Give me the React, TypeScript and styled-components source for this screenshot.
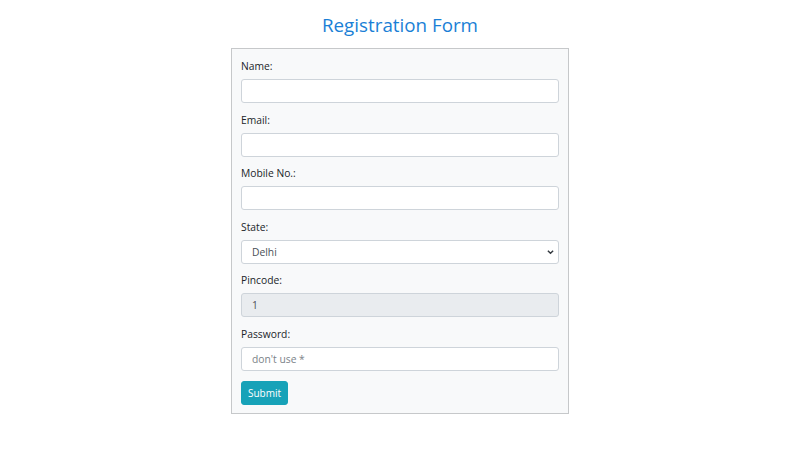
import React from "react";
import styled, { createGlobalStyle } from "styled-components";

const Global = createGlobalStyle`
  html, body { margin: 0; padding: 0; background: #fff; }
  body { font-family: "Open Sans", "Noto Sans", sans-serif; color: #212529; }
  * { box-sizing: border-box; }
`;

const Page = styled.div`
  display: flex;
  flex-direction: column;
  align-items: center;
  padding-top: 12px;
`;

const Title = styled.h2`
  margin: 0 0 10px;
  font-size: 18.8px;
  font-weight: 400;
  line-height: 26px;
  color: #1a7fd6;
`;

const Card = styled.form`
  width: 338px;
  border: 1px solid #c6c8ca;
  background: #f8f9fa;
  padding: 9px 9px 8px 9px;
  display: flex;
  flex-direction: column;
`;

const Group = styled.div`
  display: flex;
  flex-direction: column;
  margin-bottom: 8.6px;
`;

const Label = styled.label`
  font-size: 10.3px;
  line-height: 16px;
  margin-bottom: 5px;
  color: #212529;
`;

const fieldCss = `
  display: block;
  height: 24px;
  width: 100%;
  margin: 0;
  border: 1px solid #ced4da;
  border-radius: 3px;
  font-family: "Open Sans", "Noto Sans", sans-serif;
  font-size: 10.3px;
  padding: 0 10px;
  color: #495057;
  outline: none;
`;

const Input = styled.input<{ $disabled?: boolean }>`
  ${fieldCss}
  background: ${(p) => (p.$disabled ? "#e9ecef" : "#fff")};
  &::placeholder { color: #7b8288; }
`;

const SelectWrap = styled.div`
  position: relative;
  height: 24px;
`;

const Select = styled.select`
  ${fieldCss}
  appearance: none;
  background: #fff;
  padding-left: 10px;
`;

const Chevron = styled.svg`
  position: absolute;
  right: 5px;
  top: 9px;
  width: 7px;
  height: 6px;
  pointer-events: none;
`;

const Submit = styled.button`
  align-self: flex-start;
  margin: 1.5px 0 0;
  height: 24px;
  width: 47px;
  padding: 0;
  border: 1px solid #17a2b8;
  border-radius: 3px;
  background: #17a2b8;
  color: #fff;
  font-family: "Open Sans", "Noto Sans", sans-serif;
  font-size: 10px;
`;

export default function App() {
  return (
    <>
      <Global />
      <Page>
        <Title>Registration Form</Title>
        <Card onSubmit={(e) => e.preventDefault()}>
          <Group>
            <Label>Name:</Label>
            <Input type="text" />
          </Group>
          <Group>
            <Label>Email:</Label>
            <Input type="email" />
          </Group>
          <Group>
            <Label>Mobile No.:</Label>
            <Input type="text" />
          </Group>
          <Group>
            <Label>State:</Label>
            <SelectWrap>
              <Select defaultValue="Delhi">
                <option>Delhi</option>
              </Select>
              <Chevron viewBox="0 0 8 6">
                <path d="M1 1.5 L4 4.5 L7 1.5" fill="none" stroke="#343a40" strokeWidth="1.6" />
              </Chevron>
            </SelectWrap>
          </Group>
          <Group>
            <Label>Pincode:</Label>
            <Input $disabled readOnly value="1" />
          </Group>
          <Group>
            <Label>Password:</Label>
            <Input type="password" placeholder="don't use *" />
          </Group>
          <Submit type="submit">Submit</Submit>
        </Card>
      </Page>
    </>
  );
}
